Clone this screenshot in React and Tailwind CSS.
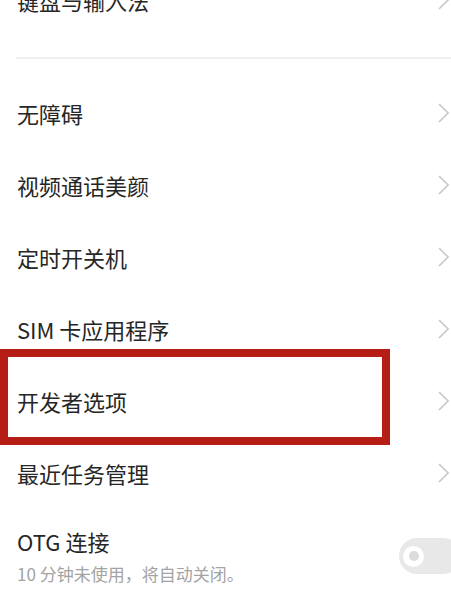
import React from "react";

const font = { fontFamily: '"Noto Sans CJK SC", "Noto Sans", sans-serif' };

const Chevron = () => (
  <svg width="12" height="20" viewBox="0 0 12 20" className="shrink-0">
    <polyline
      points="2,1 11,10 2,19"
      fill="none"
      stroke="#c9c9c9"
      strokeWidth="1.6"
      strokeLinejoin="miter"
    />
  </svg>
);

const Row = ({ title, children }) => (
  <div className="relative flex h-[72px] items-center justify-between pb-[4px] pl-[17px] pr-[2px]">
    <span className="text-[22px] leading-[30px] text-[#262626]">{title}</span>
    <Chevron />
    {children}
  </div>
);

const App = () => {
  return (
    <div
      className="h-[607px] w-[451px] overflow-hidden bg-white"
      style={font}
    >
      <div className="-mt-[34px]">
        <Row title="键盘与输入法" />
      </div>
      <div className="mt-[19px] ml-[16px] h-[2px] bg-[#efefef]" />
      <div className="pt-[20px]">
        <Row title="无障碍" />
        <Row title="视频通话美颜" />
        <Row title="定时开关机" />
        <Row title="SIM 卡应用程序" />
        <Row title="开发者选项">
          <div className="absolute left-0 top-[-18px] h-[96px] w-[390px] border-[8px] border-[#b51d16]" />
        </Row>
        <Row title="最近任务管理" />
        <div className="flex items-center justify-between pl-[17px]">
          <div className="pt-[15px]">
            <div className="text-[22px] leading-[30px] text-[#262626]">
              OTG 连接
            </div>
            <div className="mt-[7px] text-[17px] leading-[22px] text-[#a3a3a3]">
              10 分钟未使用，将自动关闭。
            </div>
          </div>
          <div className="mt-[16px] -mr-[10px] flex h-[36px] w-[62px] shrink-0 items-center rounded-full bg-[#e8e8e8] pl-[4px]">
            <div className="flex h-[21px] w-[21px] items-center justify-center rounded-full bg-white">
              <div className="h-[10px] w-[10px] rounded-full bg-[#dcdcdc]" />
            </div>
          </div>
        </div>
      </div>
    </div>
  );
};

export default App;
